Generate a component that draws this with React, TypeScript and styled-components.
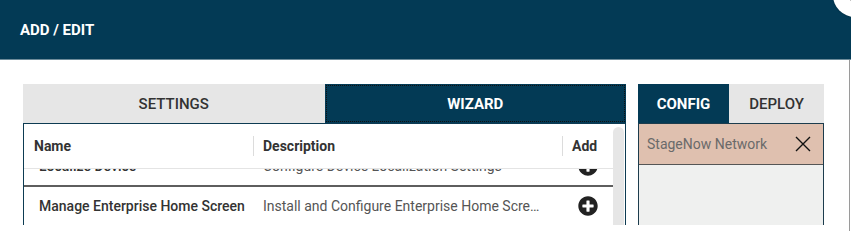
import React, { useLayoutEffect, useRef } from 'react';
import styled, { createGlobalStyle } from 'styled-components';
import { FaPlusCircle } from 'react-icons/fa';

const Global = createGlobalStyle`
  *, *::before, *::after { box-sizing: border-box; }
  html, body { margin: 0; padding: 0; background: #fff; }
  body {
    font-family: Roboto, "Liberation Sans", Arial, sans-serif;
    width: 851px;
    height: 231px;
    overflow: hidden;
  }
`;

const Modal = styled.div`
  position: relative;
  width: 851px;
  height: 231px;
  display: flex;
  flex-direction: column;
  overflow: hidden;
  background: #fff;
`;

const Header = styled.header`
  flex: none;
  height: 60px;
  background: #033a55;
  border-bottom: 1px solid #6d8b9a;
  display: flex;
  align-items: center;
  padding-left: 20px;
  color: #fff;
  font-size: 15px;
  font-weight: 700;
`;

const CloseBubble = styled.button`
  position: absolute;
  top: -27px;
  right: -26px;
  width: 44px;
  height: 44px;
  border-radius: 50%;
  border: none;
  background: #fff;
  box-shadow: 0 0 2px rgba(0, 0, 0, 0.35);
  display: flex;
  align-items: center;
  justify-content: center;
  padding: 0;
`;

const Body = styled.main`
  flex: 1;
  min-height: 0;
  width: 850px;
  border-right: 1px solid #9a9a9a;
  padding: 24px 0 6px 23px;
  display: flex;
`;

const Content = styled.div`
  flex: 1;
  min-height: 0;
  overflow: hidden;
  display: flex;
  gap: 12px;
`;

const LeftCol = styled.section`
  width: 603px;
  display: flex;
  flex-direction: column;
`;

const RightCol = styled.aside`
  width: 186px;
  display: flex;
  flex-direction: column;
`;

const TabBar = styled.div`
  flex: none;
  height: 39px;
  display: flex;
`;

const Tab = styled.div<{ $active?: boolean; $focus?: boolean; $width?: number }>`
  flex: ${(p) => (p.$width ? `0 0 ${p.$width}px` : '1')};
  display: flex;
  align-items: center;
  justify-content: center;
  font-size: 15px;
  font-weight: ${(p) => (p.$active ? 700 : 500)};
  color: ${(p) => (p.$active ? '#fff' : '#333')};
  background: ${(p) => (p.$active ? '#033a55' : '#e6e6e6')};
  outline: ${(p) => (p.$focus ? '1px dotted #111' : 'none')};
  outline-offset: -2px;
  padding-top: 1px;
`;

const TableBox = styled.div`
  flex: 1;
  min-height: 0;
  border: 1px solid #0d3b52;
  border-bottom: none;
  display: flex;
`;

const TableMain = styled.div`
  flex: 1;
  min-width: 0;
  display: flex;
  flex-direction: column;
`;

const ScrollTrack = styled.div`
  flex: none;
  width: 11px;
  margin: 3px 1px 0 0;
  background: #e6e6e6;
  border-radius: 6px 6px 0 0;
`;

const HeadRow = styled.div`
  flex: none;
  height: 45px;
  display: grid;
  grid-template-columns: 229px 309px 1fr;
  align-items: center;
  border-bottom: 1px solid #e4e4e4;
  background: #fff;
`;

const HeadCell = styled.div<{ $pad: number; $sep?: boolean }>`
  padding-left: ${(p) => p.$pad}px;
  font-size: 14px;
  font-weight: 700;
  color: #333;
  height: 20px;
  line-height: 20px;
  border-left: ${(p) => (p.$sep ? '1px solid #dcdcdc' : 'none')};
`;

const Viewport = styled.div`
  flex: 1;
  min-height: 0;
  overflow: hidden;
`;

const Row = styled.div`
  height: 40px;
  display: grid;
  grid-template-columns: 229px 309px 1fr;
  align-items: center;
  border-bottom: 2px solid #5e5e5e;
`;

const NameCell = styled.div`
  padding-left: 15px;
  font-size: 14px;
  font-weight: 500;
  color: #333;
  white-space: nowrap;
  overflow: hidden;
  text-overflow: ellipsis;
`;

const DescCell = styled.div`
  padding: 0 18px 0 10px;
  font-size: 14px;
  color: #555;
  white-space: nowrap;
  overflow: hidden;
  text-overflow: ellipsis;
`;

const AddCell = styled.div`
  display: flex;
  justify-content: center;
  align-items: center;
  color: #222;
  padding-left: 1px;
`;

const ConfigPanel = styled.div`
  flex: 1;
  min-height: 0;
  border: 1px solid #1c3c4d;
  border-bottom: none;
  background: #eff0ef;
  display: flex;
  flex-direction: column;
`;

const Chip = styled.div`
  flex: none;
  height: 41px;
  background: #dfc0af;
  border-bottom: 1px solid #555;
  display: flex;
  align-items: center;
  justify-content: space-between;
  padding: 0 12px 0 8px;
  font-size: 14px;
  color: #6a6a6a;
`;

const ChipClose = styled.span`
  display: flex;
  align-items: center;
`;

type Item = { name: string; desc: string };

const items: Item[] = [
  { name: 'Localize Device', desc: 'Configure Device Localization Settings' },
  { name: 'Manage Enterprise Home Screen', desc: 'Install and Configure Enterprise Home Screen' },
  { name: 'Configure Wi-Fi Network', desc: 'Set Up Wireless Network Connection' },
];

export default function App() {
  const viewRef = useRef<HTMLDivElement>(null);
  useLayoutEffect(() => {
    if (viewRef.current) viewRef.current.scrollTop = 22;
  }, []);

  return (
    <Modal>
      <Global />
      <Header>ADD / EDIT</Header>
      <CloseBubble aria-label="Close">
        <svg width="14" height="14" viewBox="0 0 14 14">
          <path d="M2 2 L12 12 M12 2 L2 12" stroke="#7a7a7a" strokeWidth="2" fill="none" />
        </svg>
      </CloseBubble>
      <Body>
        <Content>
          <LeftCol>
            <TabBar>
              <Tab>SETTINGS</Tab>
              <Tab $active $focus>WIZARD</Tab>
            </TabBar>
            <TableBox>
              <TableMain>
                <HeadRow>
                  <HeadCell $pad={10}>Name</HeadCell>
                  <HeadCell $pad={9} $sep>Description</HeadCell>
                  <HeadCell $pad={9} $sep>Add</HeadCell>
                </HeadRow>
                <Viewport ref={viewRef}>
                  {items.map((it) => (
                    <Row key={it.name}>
                      <NameCell>{it.name}</NameCell>
                      <DescCell>{it.desc}</DescCell>
                      <AddCell>
                        <FaPlusCircle size={20} />
                      </AddCell>
                    </Row>
                  ))}
                </Viewport>
              </TableMain>
              <ScrollTrack />
            </TableBox>
          </LeftCol>
          <RightCol>
            <TabBar>
              <Tab $active $width={91}>CONFIG</Tab>
              <Tab>DEPLOY</Tab>
            </TabBar>
            <ConfigPanel>
              <Chip>
                StageNow Network
                <ChipClose>
                  <svg width="16" height="16" viewBox="0 0 16 16">
                    <path d="M1 1 L15 15 M15 1 L1 15" stroke="#111" strokeWidth="1.4" fill="none" />
                  </svg>
                </ChipClose>
              </Chip>
            </ConfigPanel>
          </RightCol>
        </Content>
      </Body>
    </Modal>
  );
}
